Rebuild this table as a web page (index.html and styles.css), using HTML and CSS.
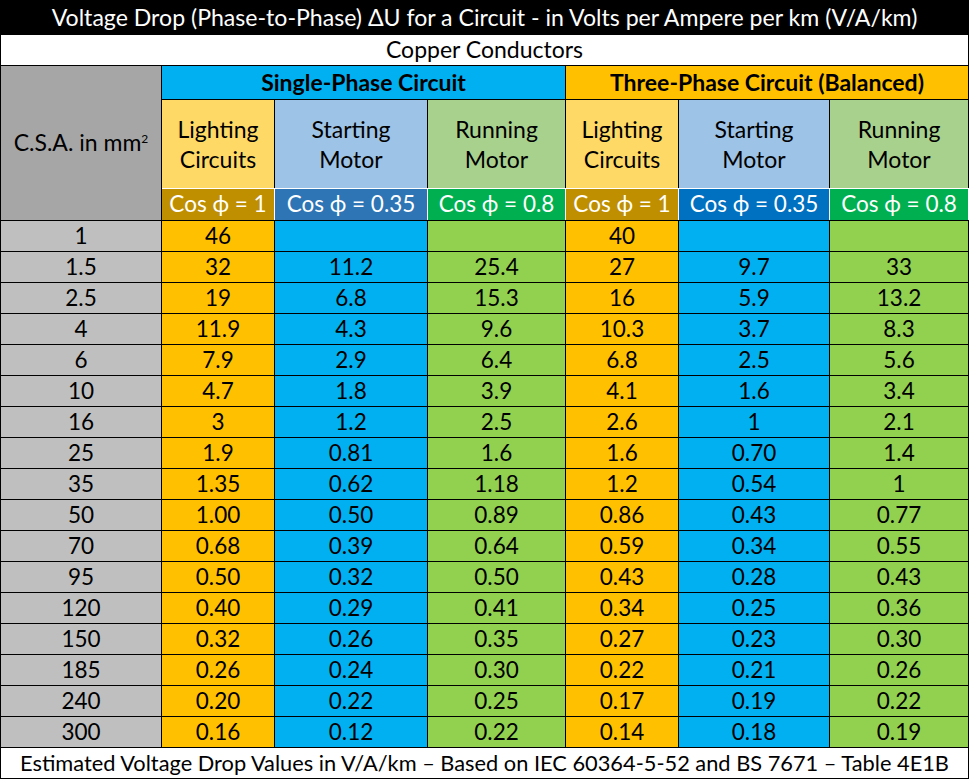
FILE: index.html
```html
<!DOCTYPE html>
<html>
<head>
<meta charset="utf-8">
<link rel="stylesheet" href="styles.css">
</head>
<body>
<table class="vd">
  <colgroup>
    <col class="c-csa">
    <col class="c-l">
    <col class="c-s">
    <col class="c-r">
    <col class="c-l">
    <col class="c-s2">
    <col class="c-r2">
  </colgroup>
  <thead>
    <tr class="r-title"><th colspan="7" class="title">Voltage Drop (Phase-to-Phase) ΔU for a Circuit - in Volts per Ampere per km (V/A/km)</th></tr>
    <tr class="r-sub"><th colspan="7" class="sub">Copper Conductors</th></tr>
    <tr class="r-grp">
      <th rowspan="3" class="csa-h">C.S.A. in mm<sup>2</sup></th>
      <th colspan="3" class="grp single">Single-Phase Circuit</th>
      <th colspan="3" class="grp three">Three-Phase Circuit (Balanced)</th>
    </tr>
    <tr class="r-names">
      <th class="nm nm-l">Lighting<br>Circuits</th>
      <th class="nm nm-s">Starting<br>Motor</th>
      <th class="nm nm-r">Running<br>Motor</th>
      <th class="nm nm-l">Lighting<br>Circuits</th>
      <th class="nm nm-s">Starting<br>Motor</th>
      <th class="nm nm-r">Running<br>Motor</th>
    </tr>
    <tr class="r-cos">
      <th class="cos cos-l">Cos ϕ = 1</th>
      <th class="cos cos-s">Cos ϕ = 0.35</th>
      <th class="cos cos-r">Cos ϕ = 0.8</th>
      <th class="cos cos-l">Cos ϕ = 1</th>
      <th class="cos cos-s2">Cos ϕ = 0.35</th>
      <th class="cos cos-r">Cos ϕ = 0.8</th>
    </tr>
  </thead>
  <tbody>
    <tr><td class="csa">1</td><td class="l">46</td><td class="s"></td><td class="r"></td><td class="l">40</td><td class="s"></td><td class="r"></td></tr>
    <tr><td class="csa">1.5</td><td class="l">32</td><td class="s">11.2</td><td class="r">25.4</td><td class="l">27</td><td class="s">9.7</td><td class="r">33</td></tr>
    <tr><td class="csa">2.5</td><td class="l">19</td><td class="s">6.8</td><td class="r">15.3</td><td class="l">16</td><td class="s">5.9</td><td class="r">13.2</td></tr>
    <tr><td class="csa">4</td><td class="l">11.9</td><td class="s">4.3</td><td class="r">9.6</td><td class="l">10.3</td><td class="s">3.7</td><td class="r">8.3</td></tr>
    <tr><td class="csa">6</td><td class="l">7.9</td><td class="s">2.9</td><td class="r">6.4</td><td class="l">6.8</td><td class="s">2.5</td><td class="r">5.6</td></tr>
    <tr><td class="csa">10</td><td class="l">4.7</td><td class="s">1.8</td><td class="r">3.9</td><td class="l">4.1</td><td class="s">1.6</td><td class="r">3.4</td></tr>
    <tr><td class="csa">16</td><td class="l">3</td><td class="s">1.2</td><td class="r">2.5</td><td class="l">2.6</td><td class="s">1</td><td class="r">2.1</td></tr>
    <tr><td class="csa">25</td><td class="l">1.9</td><td class="s">0.81</td><td class="r">1.6</td><td class="l">1.6</td><td class="s">0.70</td><td class="r">1.4</td></tr>
    <tr><td class="csa">35</td><td class="l">1.35</td><td class="s">0.62</td><td class="r">1.18</td><td class="l">1.2</td><td class="s">0.54</td><td class="r">1</td></tr>
    <tr><td class="csa">50</td><td class="l">1.00</td><td class="s">0.50</td><td class="r">0.89</td><td class="l">0.86</td><td class="s">0.43</td><td class="r">0.77</td></tr>
    <tr><td class="csa">70</td><td class="l">0.68</td><td class="s">0.39</td><td class="r">0.64</td><td class="l">0.59</td><td class="s">0.34</td><td class="r">0.55</td></tr>
    <tr><td class="csa">95</td><td class="l">0.50</td><td class="s">0.32</td><td class="r">0.50</td><td class="l">0.43</td><td class="s">0.28</td><td class="r">0.43</td></tr>
    <tr><td class="csa">120</td><td class="l">0.40</td><td class="s">0.29</td><td class="r">0.41</td><td class="l">0.34</td><td class="s">0.25</td><td class="r">0.36</td></tr>
    <tr><td class="csa">150</td><td class="l">0.32</td><td class="s">0.26</td><td class="r">0.35</td><td class="l">0.27</td><td class="s">0.23</td><td class="r">0.30</td></tr>
    <tr><td class="csa">185</td><td class="l">0.26</td><td class="s">0.24</td><td class="r">0.30</td><td class="l">0.22</td><td class="s">0.21</td><td class="r">0.26</td></tr>
    <tr><td class="csa">240</td><td class="l">0.20</td><td class="s">0.22</td><td class="r">0.25</td><td class="l">0.17</td><td class="s">0.19</td><td class="r">0.22</td></tr>
    <tr><td class="csa">300</td><td class="l">0.16</td><td class="s">0.12</td><td class="r">0.22</td><td class="l">0.14</td><td class="s">0.18</td><td class="r">0.19</td></tr>
  </tbody>
  <tfoot>
    <tr class="r-foot"><td colspan="7" class="foot">Estimated Voltage Drop Values in V/A/km – Based on IEC 60364-5-52 and BS 7671 – Table 4E1B</td></tr>
  </tfoot>
</table>
</body>
</html>
```
FILE: styles.css
```css
html, body {
  margin: 0;
  padding: 0;
  background: #ffffff;
}

.vd {
  border-collapse: collapse;
  table-layout: fixed;
  width: 969px;
  font-family: Lato, "Open Sans", sans-serif;
  color: #000;
}

.c-csa { width: 161px; }
.c-l { width: 113px; }
.c-s { width: 153px; }
.c-r { width: 138px; }
.c-s2 { width: 151px; }
.c-r2 { width: 139px; }

.vd th, .vd td {
  border: 1px solid #000;
  padding: 0;
  text-align: center;
  vertical-align: middle;
  font-weight: normal;
  white-space: nowrap;
  overflow: hidden;
  line-height: 1.1;
}

.r-title { height: 34px; }
.title {
  background: #000;
  color: #fff;
  font-size: 23.1px;
}

.r-sub { height: 31px; }
.sub {
  background: #fff;
  font-size: 23px;
}

.r-grp { height: 34px; }
.vd th.grp {
  font-weight: bold;
  font-size: 23px;
}
.single { background: #00b0f0; }
.three { background: #ffc000; }

.csa-h {
  background: #a6a6a6;
  font-size: 23px;
}
.csa-h sup {
  font-size: 12px;
  vertical-align: 8px;
  line-height: 0;
}

.r-names { height: 89px; }
.vd th.nm {
  font-size: 23px;
  line-height: 30px;
  padding-top: 0;
  border-bottom-color: #fff;
}
.nm-l { background: #ffd966; }
.nm-s { background: #9dc3e6; }
.nm-r { background: #a9d18e; }

.r-cos { height: 32px; }
.vd th.cos {
  color: #fff;
  font-size: 22.5px;
  border-left-color: #fff;
  border-right-color: #fff;
}
.cos-l { background: #bf8f00; }
.cos-s { background: #2e75b6; }
.cos-s2 { background: #0070c0; }
.cos-r { background: #00b050; }

tbody tr { height: 31px; }
.vd tbody td { font-size: 22.5px; }
.csa { background: #bfbfbf; }
.l { background: #ffc000; }
.s { background: #00b0f0; }
.r { background: #92d050; }

.r-foot { height: 31px; }
.foot {
  background: #fff;
  font-size: 21.8px;
}
```
